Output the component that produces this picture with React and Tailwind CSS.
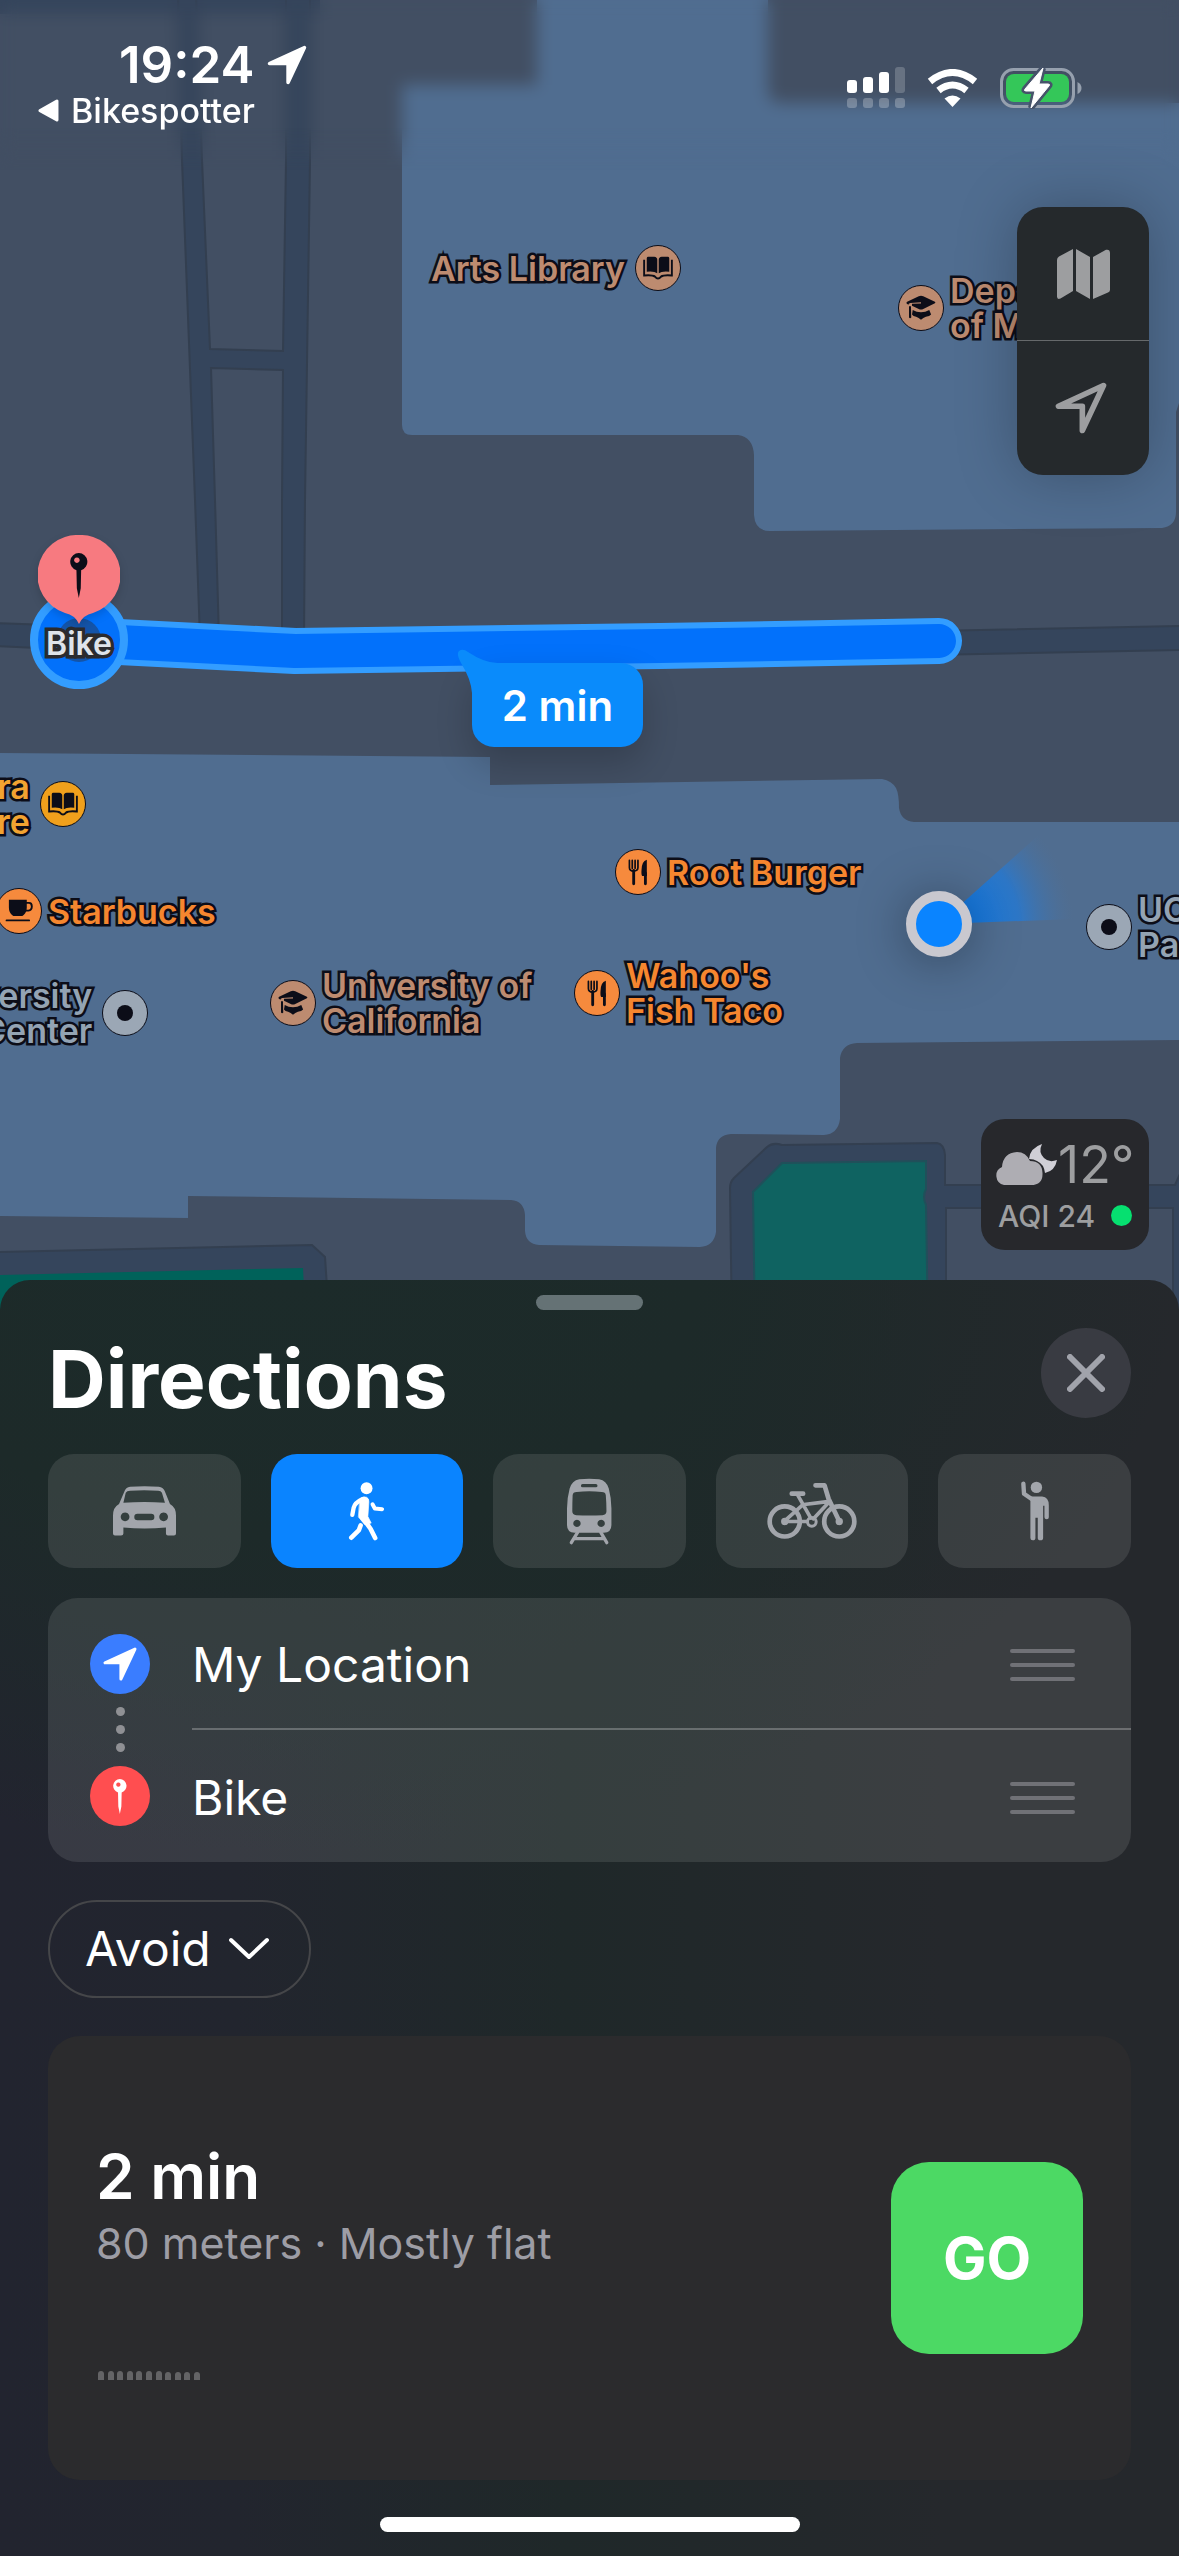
import { useState } from 'react';

/* ---------- Icons ---------- */

function ArrowIcon({ className, filled = true }) {
  return (
    <svg viewBox="0 0 24 24" className={className} aria-hidden="true">
      <path
        d="M22 2 2 11.2h10.6V22Z"
        fill={filled ? 'currentColor' : 'none'}
        stroke="currentColor"
        strokeWidth={filled ? 2 : 2.5}
        strokeLinejoin="round"
      />
    </svg>
  );
}

function BookIcon() {
  return (
    <svg viewBox="0 0 40 32" className="w-[30px]" aria-hidden="true">
      <path
        d="M5 3q0-1.5 1.5-2H15q4 .5 4 4v18q-4-3-14-2ZM35 3q0-1.5-1.5-2H25q-4 .5-4 4v18q4-3 14-2Z"
        fill="currentColor"
      />
      <path
        d="M1.5 5v21q11-1 14.5 1.500 2 2.5 4 2.5t4-2.5Q27.5 25 38.5 26V5"
        fill="none"
        stroke="currentColor"
        strokeWidth="2.5"
      />
    </svg>
  );
}

function CapIcon() {
  return (
    <svg viewBox="0 0 40 34" className="w-[30px]" aria-hidden="true" fill="currentColor">
      <path d="M20 1q1.5 0 3 .8L38.5 9q1.5 1 0 2L23 18.6q-3 1.5-6 0L8 14.2v-2.4l12-.4V9.8l-14.400 1Q3 11.6 3.4 13L1 11.5Q0 10 1.500 9L17 1.8Q18.500 1 20 1Z" />
      <path d="M9 20q5 3 11 3t11-3l2.5 6q-2 2.5-7 3Q23 30 20 33q-3-3-6.500-4-4-.5-5.5-3Z" />
      <path d="M4 15h2.6l.4 15q-1.5 2-3 0Z" />
    </svg>
  );
}

function CupIcon() {
  return (
    <svg viewBox="0 0 36 31" className="w-[28px]" aria-hidden="true">
      <path d="M5 1h23v10q0 6-4 9.5-1.500 1.5-4 1.5h-7q-2.500 0-4-1.5Q5 17 5 11Z" fill="currentColor" />
      <path d="M27 5h4q3.5 0 3.5 4.5T30 15h-3" fill="none" stroke="currentColor" strokeWidth="2.4" />
      <path d="M2 27.5h29" stroke="currentColor" strokeWidth="2.4" strokeLinecap="round" />
    </svg>
  );
}

function ForkKnifeIcon() {
  return (
    <svg viewBox="0 0 28 38" className="h-[27px]" aria-hidden="true">
      <path
        d="M2 2v10q0 5 6 5t6-5V2M6 2v11M10 2v11"
        fill="none"
        stroke="currentColor"
        strokeWidth="2.4"
        strokeLinecap="round"
      />
      <path d="M8 16v19M24.5 20v15" stroke="currentColor" strokeWidth="4" strokeLinecap="round" />
      <path d="M26.5 1v23H20q-1.5-1.5-1-8Q19 3 26.5 1Z" fill="currentColor" />
    </svg>
  );
}

function DotIcon() {
  return <span className="size-4 rounded-full bg-[#0c0d18]" />;
}

function PinIcon({ className }) {
  return (
    <svg viewBox="0 0 18 46" className={className} aria-hidden="true">
      <path
        d="M9 0a9 9 0 0 1 2.4 17.6L11 36 9 46 7 36l-.4-18.4A9 9 0 0 1 9 0Zm-2 4.5a2.8 2.8 0 1 0 .1 0Z"
        fill="currentColor"
        fillRule="evenodd"
      />
    </svg>
  );
}

function MapIcon() {
  return (
    <svg viewBox="0 0 53 50" className="w-[53px]" fill="currentColor" aria-hidden="true">
      <path d="M0 11q0-2.5 2-3.5L16 0v42L3.5 49.5Q0 51 0 47.5ZM19 0l14 8v42l-14-8ZM36 8 49 .8Q53 0 53 4v37q0 1.500-2 2.500L36 50Z" />
    </svg>
  );
}

function CarIcon() {
  return (
    <svg viewBox="39 50 188 148" className="w-[63px]" aria-hidden="true">
      <path
        d="M74 64q4-11 16-12 43-3 86 0 12 1 17 12l16 40q18 10 18 34v54q0 6-6 6h-18q-6 0-6-6v-18q-64 6-127 0v18q0 6-7 6H45q-6 0-6-6v-54q0-24 18-34Zm3 6-7 30q63-4 124 0l-9-30q-3-6-11-6-42-2-84 0-10 0-13 6Zm-2 59a13 13 0 1 0 .1 0Zm115 0a13 13 0 1 0 .1 0Zm-78 4a9.5 9.5 0 0 0 0 19h41a9.5 9.5 0 0 0 0-19Z"
        fill="currentColor"
        fillRule="evenodd"
      />
    </svg>
  );
}

function WalkIcon() {
  return (
    <svg viewBox="744 33 112 178" className="h-[59px]" fill="none" stroke="currentColor" strokeLinecap="round" strokeLinejoin="round" aria-hidden="true">
      <circle cx="800" cy="52" r="18" fill="currentColor" stroke="none" />
      <path d="M787 85q-22 10-26 26l-4 21" strokeWidth="13" />
      <path d="M780 84q10-10 20-5 8 4 7 14l-3 44 10 20-20 4-18-22Z" fill="currentColor" strokeWidth="2" />
      <path d="m789 142 23 32 14 28" strokeWidth="14" />
      <path d="m782 164-5 14-23 23" strokeWidth="14" />
      <path d="m818 100 7 13 22 2" strokeWidth="12" />
    </svg>
  );
}

function TrainIcon() {
  return (
    <svg viewBox="18 38 140 202" className="h-[67px]" aria-hidden="true">
      <path
        d="M58 42q30-4 60 0 22 4 29 28 8 30 8 60v50q0 23-23 23H44q-23 0-23-23v-50q0-30 8-60 7-24 29-28Zm10 14a5 5 0 0 0 0 10h40a5 5 0 0 0 0-10ZM50 80q-11 0-12 10-1 22-1 48 0 11 12 12 39 2 79 0 12-1 12-12 0-26-2-48-1-10-12-10-38-4-76 0Zm1 84a11 11 0 1 0 .1 0Zm73 0a11 11 0 1 0 .1 0Z"
        fill="currentColor"
        fillRule="evenodd"
      />
      <path d="m53 202-19 31m89-31 18 31M46 221h84" fill="none" stroke="currentColor" strokeWidth="10" strokeLinecap="round" />
    </svg>
  );
}

function BikeIcon() {
  return (
    <svg viewBox="623 52 269 171" className="w-[90px]" fill="none" stroke="currentColor" strokeLinecap="round" strokeLinejoin="round" aria-hidden="true">
      <circle cx="676" cy="170" r="45" strokeWidth="14" />
      <circle cx="839" cy="170" r="45" strokeWidth="14" />
      <path d="M697 87h34M768 62h27l12 40 32 67" strokeWidth="14" />
      <path d="m714 90 40 70M728 120l82-10-48 52M676 170h66m-14-48-52 46" strokeWidth="11" />
      <circle cx="757" cy="171" r="13" strokeWidth="9" />
      <circle cx="676" cy="170" r="6" strokeWidth="10" />
      <circle cx="839" cy="170" r="6" strokeWidth="10" />
    </svg>
  );
}

function HailIcon() {
  return (
    <svg viewBox="1380 48 90 179" className="h-[60px]" fill="currentColor" aria-hidden="true">
      <circle cx="1429" cy="67" r="17" />
      <path d="m1390 56 2 30 26 18" fill="none" stroke="currentColor" strokeWidth="13" strokeLinecap="round" strokeLinejoin="round" />
      <path d="M1412 94h34q20 2 20 26v36q0 6-6 6-7 0-7-6v-34h-4v96q0 7-8 7t-8-7v-60h-7v60q0 7-8 7-7 0-7-7V110Z" />
    </svg>
  );
}

// Cloud with a crescent moon behind its right shoulder
function WeatherIcon() {
  return (
    <svg viewBox="0 0 64 42" className="w-[64px]" aria-hidden="true">
      <path
        d="M48 0q-4 8 2 14 5 5 13 2-2 11-12 13-1-9-8-12-3-2-8-2 1-11 13-15Z"
        fill="#d0cfd6"
      />
      <path d="M10 41a9.5 9.5 0 0 1-2-18q1-14 15-15 9 0 13 9 12 0 12.500 12T37 41Z" fill="#aeadb3" />
    </svg>
  );
}

/* ---------- Map ---------- */

const POIS = [
  { lines: ['Arts Library'], icon: BookIcon, side: 'left', pos: 'left-[431px] top-[245px]', text: 'text-[#bd8b70]', dot: 'bg-[#bd8b70]' },
  { lines: ['Depa', 'of M'], icon: CapIcon, side: 'right', pos: 'left-[898px] top-[273px]', text: 'text-[#bd8b70]', dot: 'bg-[#bd8b70]' },
  { lines: ['ra', 're'], icon: BookIcon, side: 'left', pos: '-left-[3px] top-[769px]', text: 'text-[#f2a331]', dot: 'bg-[#f0a01c]' },
  { lines: ['Starbucks'], icon: CupIcon, side: 'right', pos: '-left-[4px] top-[888px]', text: 'text-[#f5862f]', dot: 'bg-[#f68a3d]' },
  { lines: ['versity', 'Center'], icon: DotIcon, side: 'left', pos: '-left-[21px] top-[978px]', text: 'text-[#93a3b3]', dot: 'bg-[#9ba7b5]' },
  { lines: ['University of', 'California'], icon: CapIcon, side: 'right', pos: 'left-[270px] top-[968px]', text: 'text-[#bd8b70]', dot: 'bg-[#bd8b70]' },
  { lines: ['Root Burger'], icon: ForkKnifeIcon, side: 'right', pos: 'left-[615px] top-[849px]', text: 'text-[#f5862f]', dot: 'bg-[#f68a3d]' },
  { lines: ["Wahoo's", 'Fish Taco'], icon: ForkKnifeIcon, side: 'right', pos: 'left-[574px] top-[958px]', text: 'text-[#f5862f]', dot: 'bg-[#f68a3d]' },
  { lines: ['UC', 'Pa'], icon: DotIcon, side: 'right', pos: 'left-[1086px] top-[892px]', text: 'text-[#93a3b3]', dot: 'bg-[#9ba7b5]' },
];

function Poi({ poi }) {
  const Icon = poi.icon;
  return (
    <div
      className={`absolute flex items-center whitespace-nowrap ${poi.pos} ${
        poi.side === 'left' ? 'flex-row-reverse gap-2.5 text-right' : 'gap-1.5'
      }`}
    >
      <span
        className={`flex size-[46px] shrink-0 items-center justify-center rounded-full border border-[#0c0d18] text-[#0c0d18] ${poi.dot}`}
      >
        <Icon />
      </span>
      <p
        className={`text-[34px] leading-[35px] font-semibold [-webkit-text-stroke:5px_#0c0d18] [paint-order:stroke_fill] ${poi.text}`}
      >
        {poi.lines.map((line) => (
          <span key={line} className="block">
            {line}
          </span>
        ))}
      </p>
    </div>
  );
}

function MapDrawing() {
  return (
    <svg
      viewBox="0 0 1179 1320"
      preserveAspectRatio="xMinYMin slice"
      className="absolute inset-0 size-full"
      aria-hidden="true"
    >
      <defs>
        <radialGradient id="heading" gradientUnits="userSpaceOnUse" cx="939" cy="924" r="134">
          <stop offset="0.3" stopColor="#1878dc" />
          <stop offset="0.6" stopColor="#2a78cc" stopOpacity="0.9" />
          <stop offset="1" stopColor="#4a72a0" stopOpacity="0" />
        </radialGradient>
      </defs>

      {/* Buildings */}
      <g fill="#506d90">
        <path d="M537-20V85H402V425q0 10 10 10l326 0q15 2 16 20v60q1 16 16 16l392-3q14-2 14-16V412l3-9V103H782q-14 0-14-14V-20Z" />
        <path d="m0 753 490 4v28l392-6q10 2 14 9 3 6 3 20 2 13 15 14h265v218l-322 3q-15 1-17 15v61q-2 15-16 16l-93-1q-14 1-15 14v84q-2 14-16 15l-161-2q-13-1-14-14v-16q-1-14-14-15l-323-4v22l-188-2Z" />
      </g>

      {/* Roads */}
      <g fill="#35455c" stroke="#333f50" strokeWidth="2">
        <path d="M-5-5H320V14H-5Z" stroke="none" />
        <path d="M178-5h18l6 165 8 189 73 2 3-190V-5h24v165l-5 340-1 140h-22V500l1-130-72-2 4 132 4 138h-19l-5-138-13-340Z" />
        <path d="m-5 623 85 3v24l-85-4ZM930 631l254-5v24l-254 5Z" />
        <path d="m-5 1252 317-7 13 12 5 75H-5Z" />
        <path d="m732 1330-2-142q0-6 4-10l33-31q6-5 15-2l155-2q7 1 8 12v30h230l9-20v165h-11v-122H946v122Z" />
      </g>
      <path d="m-5 1275 308-7 3 60H-5Z" fill="#00625a" />
      <path d="m755 1330-2-138 29-29 144-2v28q-4 8 0 16l2 125Z" fill="#0f6361" stroke="#20505a" strokeWidth="2" />

      {/* Route */}
      <g fill="none" strokeLinecap="round" strokeLinejoin="round">
        <path d="m80 640 215 11 365-5 279-5" stroke="#339dff" strokeWidth="46" />
        <path d="m80 640 215 11 365-5 279-5" stroke="#0271fb" strokeWidth="34" />
      </g>
      <circle cx="79" cy="640" r="45" fill="#0271fb" stroke="#339dff" strokeWidth="8" />
      <circle cx="79" cy="640" r="22" fill="#1454a8" />

      {/* Heading cone */}
      <path d="m939 924 103-92q30 36 32 87Z" fill="url(#heading)" />
    </svg>
  );
}

function StatusBar() {
  return (
    <header className="absolute inset-x-0 top-0 flex justify-between pt-[35px] pr-[95px] pl-[38px] text-white">
      <div className="pointer-events-none absolute inset-x-0 top-0 h-[170px] backdrop-blur-[8px] [mask-image:linear-gradient(black_75%,transparent)]" />
      <div className="relative">
        <div className="flex items-center gap-3 pl-[81px]">
          <span className="text-[51px] leading-[60px] font-semibold">19:24</span>
          <ArrowIcon className="size-[42px]" />
        </div>
        <a href="#bikespotter" className="flex items-center gap-3 text-[34px] leading-[32px] font-medium">
          <svg viewBox="0 0 20 22" className="w-[21px]" aria-hidden="true">
            <path d="M18 2v18L2 11Z" fill="white" stroke="white" strokeWidth="3" strokeLinejoin="round" />
          </svg>
          Bikespotter
        </a>
      </div>
      <div className="relative flex items-start gap-[22px] pt-8">
        <svg viewBox="0 0 58 41" className="w-[58px]" fill="white" aria-label="Signal">
          <rect x="0" y="13" width="10" height="13" rx="3" />
          <rect x="16" y="10" width="10" height="16" rx="3" />
          <rect x="32" y="5" width="10" height="21" rx="3" />
          <rect x="48" y="0" width="10" height="26" rx="3" opacity="0.2" />
          <g opacity="0.25">
            <rect x="0" y="31" width="10" height="10" rx="3" />
            <rect x="16" y="31" width="10" height="10" rx="3" />
            <rect x="32" y="31" width="10" height="10" rx="3" />
            <rect x="48" y="31" width="10" height="10" rx="3" />
          </g>
        </svg>
        <svg viewBox="0 0 51 38" className="mt-0.5 w-[51px]" aria-label="Wi-Fi">
          <path d="M3 12.5q22.5-18 45 0M11.500 21.500q14-11 28 0" fill="none" stroke="white" strokeWidth="7" />
          <path d="M17.5 29.500q8-6 16 0l-8 8.500Z" fill="white" />
        </svg>
        <svg viewBox="0 0 84 42" className="w-[84px]" aria-label="Battery charging">
          <rect x="1.5" y="2.5" width="72" height="37" rx="12" fill="none" stroke="#96a0ae" strokeWidth="3" />
          <path d="M77.5 15q4 2 4 6t-4 6Z" fill="#96a0ae" />
          <rect x="6" y="7" width="63" height="28" rx="8" fill="#34c759" />
          <path d="M43 1 25 22q-1.500 2 1 2h9l-4 17 18-22q1.500-2-1-2h-9Z" fill="white" stroke="#46536a" strokeWidth="6" />
          <path d="M43 1 25 22q-1.500 2 1 2h9l-4 17 18-22q1.500-2-1-2h-9Z" fill="white" stroke="white" strokeLinejoin="round" />
        </svg>
      </div>
    </header>
  );
}

function MapView() {
  return (
    <section aria-label="Map" className="relative h-[1320px] overflow-hidden bg-[#424f63]">
      <MapDrawing />
      {POIS.map((poi) => (
        <Poi key={poi.lines.join(' ')} poi={poi} />
      ))}

      {/* Destination pin */}
      <div className="absolute top-[535px] left-[38px] flex w-[82px] flex-col items-center">
        <div className="relative flex h-[89px] w-[82px] justify-center pt-[18px]">
          <svg viewBox="0 0 82 89" className="absolute inset-0 drop-shadow-lg" aria-hidden="true">
            <path d="M41 0a40 40 0 0 1 14 78q-10 2-14 11-4-9-14-11A40 40 0 0 1 41 0Z" fill="#f77a80" />
          </svg>
          <PinIcon className="relative h-[45px] text-[#0c0d18]" />
        </div>
        <span className="text-[32px] leading-10 font-semibold text-[#dfe4ea] [-webkit-text-stroke:7px_#2b2b2e] [paint-order:stroke_fill]">
          Bike
        </span>
      </div>

      {/* Route callout */}
      <div className="absolute top-[663px] left-[472px] flex h-[84px] w-[171px] items-center justify-center rounded-[22px] bg-[#0a8bfb] shadow-[0_16px_36px_rgba(0,0,0,0.2)]">
        <svg viewBox="0 0 50 50" className="absolute -top-[14px] -left-[15px] w-[50px]" aria-hidden="true">
          <path d="M15 44Q14 30 4 14-1 5 2 2 6-1 11 3q18 12 32 11v30Z" fill="#0a8bfb" />
        </svg>
        <span className="relative text-[42px] font-semibold text-white">2 min</span>
      </div>

      {/* Current location */}
      <div className="absolute top-[891px] left-[906px] size-[66px] rounded-full border-[10px] border-[#c9c8cf] bg-[#0a84ff] shadow-[0_4px_50px_rgba(0,0,0,0.35)]" />

      <StatusBar />

      <div className="absolute top-[207px] right-[30px] flex w-[132px] flex-col divide-y divide-[#66696b] overflow-hidden rounded-[26px] bg-[#25292c] text-[#9d9ea0] shadow-[0_0_60px_rgba(0,0,0,0.25)]">
        <button type="button" aria-label="Map mode" className="flex h-[134px] items-center justify-center">
          <MapIcon />
        </button>
        <button type="button" aria-label="Track location" className="flex h-[134px] items-center justify-center pr-1">
          <ArrowIcon className="size-[54px]" filled={false} />
        </button>
      </div>

      <div className="absolute top-[1119px] right-[30px] flex h-[131px] w-[168px] flex-col justify-center rounded-[24px] bg-[#27282c] px-[13px] text-[#9d9ea0]">
        <div className="flex h-[62px] items-center">
          <WeatherIcon />
          <span className="text-[52px]">12°</span>
        </div>
        <div className="flex items-center justify-between px-1">
          <span className="text-[30px] leading-10 font-medium">AQI 24</span>
          <span className="size-[21px] rounded-full bg-[#06e070]" />
        </div>
      </div>
    </section>
  );
}

/* ---------- Directions sheet ---------- */

const MODES = [
  { id: 'drive', label: 'Drive', icon: CarIcon },
  { id: 'walk', label: 'Walk', icon: WalkIcon },
  { id: 'transit', label: 'Transit', icon: TrainIcon },
  { id: 'cycle', label: 'Cycle', icon: BikeIcon },
  { id: 'rideshare', label: 'Ride share', icon: HailIcon },
];

const ELEVATION = [9, 9, 9, 9, 9, 9, 9, 8, 8, 8, 8];

function DragHandle({ label }) {
  return (
    <button type="button" aria-label={label} className="mr-14 flex w-[65px] flex-col gap-2.5">
      <span className="h-1 w-full rounded-full bg-[#707176]" />
      <span className="h-1 w-full rounded-full bg-[#707176]" />
      <span className="h-1 w-full rounded-full bg-[#707176]" />
    </button>
  );
}

function Stops() {
  return (
    <ul className="relative mt-[30px] rounded-[30px] bg-white/10 text-[48px] text-white">
      <li className="flex items-center pl-[42px]">
        <span className="flex size-[60px] items-center justify-center rounded-full bg-[#3a7dff]">
          <ArrowIcon className="size-[36px]" />
        </span>
        <div className="ml-[42px] flex h-[132px] flex-1 items-center justify-between border-b-2 border-white/25 pt-1">
          <span>My Location</span>
          <DragHandle label="Reorder My Location" />
        </div>
      </li>
      <li className="flex items-center pl-[42px]">
        <span className="flex size-[60px] items-center justify-center rounded-full bg-[#ff4e50]">
          <PinIcon className="h-[35px]" />
        </span>
        <div className="ml-[42px] flex h-[132px] flex-1 items-center justify-between pt-1">
          <span>Bike</span>
          <DragHandle label="Reorder Bike" />
        </div>
      </li>
      <li aria-hidden="true" className="absolute top-[109px] left-[68px] flex flex-col gap-[9px]">
        <span className="size-[9px] rounded-full bg-[#8f9094]" />
        <span className="size-[9px] rounded-full bg-[#8f9094]" />
        <span className="size-[9px] rounded-full bg-[#8f9094]" />
      </li>
    </ul>
  );
}

function RouteCard() {
  return (
    <article className="mt-[38px] flex h-[444px] items-center justify-between rounded-[32px] bg-[#2b2b2d] px-12">
      <div className="pt-[5px]">
        <h2 className="text-[62px] leading-[72px] font-semibold text-white">2 min</h2>
        <p className="text-[43px] leading-[60px] text-[#9d9da5]">80 meters · Mostly flat</p>
        <div className="mt-[97px] ml-0.5 flex h-[10px] w-[102px] items-end justify-between">
          {ELEVATION.map((height, index) => (
            <span key={index} className="w-[6px] rounded-t-[3px] bg-[#646466]" style={{ height }} />
          ))}
        </div>
      </div>
      <button type="button" className="size-[192px] rounded-[38px] bg-[#4cd964] text-[58px] font-bold text-white">
        GO
      </button>
    </article>
  );
}

function DirectionsSheet() {
  const [mode, setMode] = useState('walk');

  return (
    <section
      aria-label="Directions"
      className="relative -mt-10 flex flex-1 flex-col rounded-t-[30px] bg-[#20282a] bg-[radial-gradient(ellipse_75%_45%_at_25%_0%,#1c2b2a_0%,#1d2a29_45%,transparent_100%),linear-gradient(90deg,#22242f_0%,#22252e_20%,#1f2829_48%,#25282c_80%)] px-12 pt-[15px] pb-6"
    >
      <div className="mx-auto h-[15px] w-[107px] rounded-full bg-[#657275]" />
      <div className="mt-[18px] flex h-[90px] items-end justify-between">
        <h1 className="text-[80px] leading-[78px] font-bold text-white">Directions</h1>
        <button
          type="button"
          aria-label="Close"
          className="flex size-[90px] items-center justify-center rounded-full bg-[#393b42] text-[#a1a3ab]"
        >
          <svg viewBox="0 0 38 38" className="w-[38px]" aria-hidden="true">
            <path d="m3 3 32 32M35 3 3 35" stroke="currentColor" strokeWidth="6" strokeLinecap="round" />
          </svg>
        </button>
      </div>

      <div className="mt-[36px] grid grid-cols-5 gap-[30px]">
        {MODES.map(({ id, label, icon: Icon }) => (
          <button
            type="button"
            key={id}
            aria-label={label}
            aria-pressed={mode === id}
            onClick={() => setMode(id)}
            className={`flex h-[114px] items-center justify-center rounded-[26px] ${
              mode === id ? 'bg-[#0a84ff] text-white' : 'bg-white/10 text-[#a2a5ab]'
            }`}
          >
            <Icon />
          </button>
        ))}
      </div>

      <Stops />

      <button
        type="button"
        className="mt-[38px] flex h-[98px] items-center gap-[18px] self-start rounded-full border-2 border-[#454649] pr-10 pl-[35px] text-[48px] text-white"
      >
        Avoid
        <svg viewBox="0 0 40 24" className="w-[40px]" fill="none" aria-hidden="true">
          <path d="m2 3 18 17L38 3" stroke="currentColor" strokeWidth="4" strokeLinecap="round" strokeLinejoin="round" />
        </svg>
      </button>

      <RouteCard />

      <div className="mx-auto mt-[37px] h-[15px] w-[420px] rounded-full bg-white" />
    </section>
  );
}

export default function App() {
  return (
    <main className="flex min-h-screen flex-col bg-[#424f63] font-['Inter','Liberation_Sans',sans-serif]">
      <MapView />
      <DirectionsSheet />
    </main>
  );
}
